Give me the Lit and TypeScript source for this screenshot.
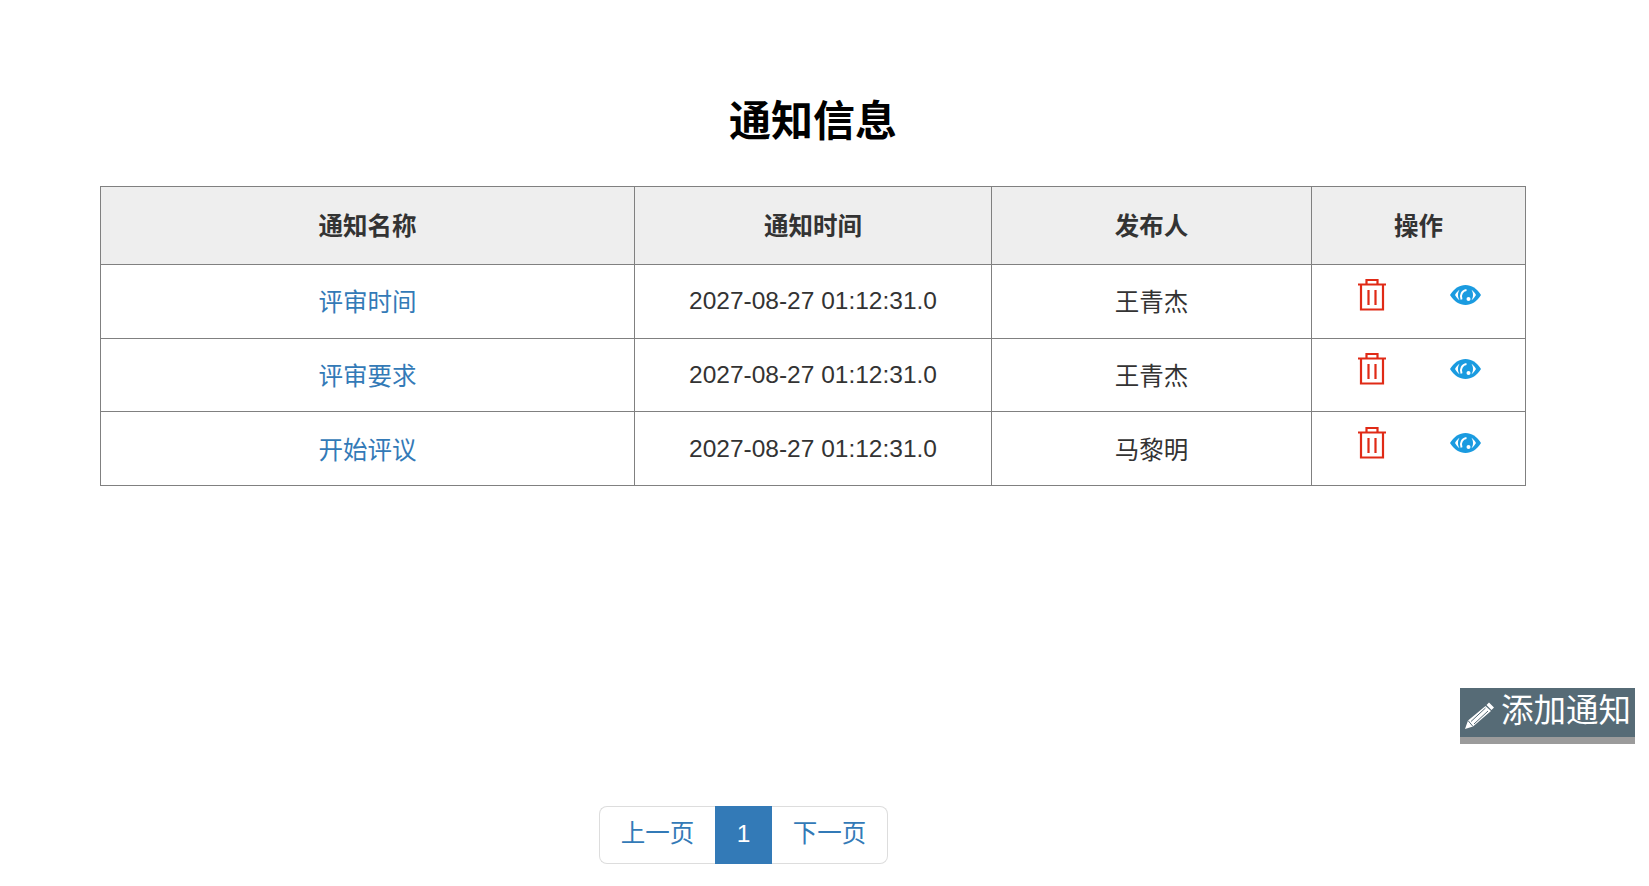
import { LitElement, html, css } from "lit";
import { customElement } from "lit/decorators.js";

const rows = [
  { name: "评审时间", time: "2027-08-27 01:12:31.0", who: "王青杰" },
  { name: "评审要求", time: "2027-08-27 01:12:31.0", who: "王青杰" },
  { name: "开始评议", time: "2027-08-27 01:12:31.0", who: "马黎明" },
];

const trash = html`<svg class="trash" viewBox="0 0 28 32" width="28" height="32" aria-hidden="true">
  <path d="M0 5.500h28M8.500 5V1h11v4M3 6.500v24h22v-24M10.500 11v15M17.500 11v15" fill="none" stroke="#e02a16" stroke-width="2.200"/>
</svg>`;

const eye = html`<svg class="eye" viewBox="0 0 31 20" width="31" height="20" aria-hidden="true">
  <path fill="#1a9be0" d="M0 10C4 3.500 9.500 0 15.500 0S27 3.500 31 10c-4 6.500-9.500 10-15.500 10S4 16.500 0 10Z"/>
  <path fill="#fff" d="M5 10c1.300-2.300 2.800-4 4.500-5.200C8.600 6.300 8 8 8 10s.6 3.700 1.500 5.200C7.800 14 6.300 12.300 5 10ZM26 10c-1.300 2.300-2.800 4-4.500 5.200.9-1.500 1.500-3.200 1.500-5.200s-.6-3.700-1.500-5.200C23.200 6 24.700 7.700 26 10Z"/>
  <path d="M11.500 14.500c-1.800-4.500.8-9 5-9.500" fill="none" stroke="#fff" stroke-width="2"/>
  <circle cx="18.500" cy="14" r="2" fill="#fff"/>
</svg>`;

const pencil = html`<svg class="pencil" viewBox="0 0 32 32" width="32" height="32" aria-hidden="true">
  <path fill="#fff" d="M25 2.500l5 5-2.500 2.500-5-5ZM21.500 6l5.500 5L9 26.500 1 29l3-8.500Z"/>
  <path d="M7 21.500L21.500 8M10 24L24 11M4 20.500l5 6" stroke="#566b76" stroke-width="1" fill="none"/>
</svg>`;

@customElement("app-root")
export class AppRoot extends LitElement {
  static styles = css`
    :host {
      display: block;
      position: relative;
      height: 886px;
      overflow: hidden;
      background: #fff;
      color: #333;
      font-family: "Liberation Sans", "Noto Sans CJK SC", sans-serif;
      font-size: 24.5px;
    }
    .page {
      padding: 0 123px 0 100px;
    }
    h1 {
      margin: 0;
      padding-top: 92px;
      height: 94px;
      line-height: 60px;
      font-size: 42px;
      font-weight: 700;
      color: #000;
      text-align: center;
      box-sizing: content-box;
    }
    table {
      width: 100%;
      table-layout: fixed;
      border-collapse: collapse;
    }
    .c1 { width: 534px; }
    .c2 { width: 357px; }
    .c3 { width: 320px; }
    th, td {
      border: 1px solid #808080;
      padding: 0;
      text-align: center;
      vertical-align: middle;
      box-sizing: border-box;
    }
    th {
      height: 78px;
      padding-bottom: 3px;
      background: #eee;
      font-weight: 700;
    }
    td {
      height: 73.67px;
    }
    td.cjk {
      padding-bottom: 1px;
    }
    a {
      color: #337ab7;
      text-decoration: none;
    }
    .ops {
      display: flex;
      justify-content: space-between;
      align-items: flex-start;
      height: 72px;
      padding: 14px 44px 0 46px;
      box-sizing: border-box;
    }
    .trash { display: block; }
    .eye { display: block; margin-top: 6px; }
    .pager {
      display: flex;
      width: max-content;
      margin: 320px 0 0 499px;
      height: 58px;
      line-height: 54px;
      box-sizing: border-box;
      white-space: nowrap;
    }
    .pager a {
      display: block;
      box-sizing: border-box;
      border: 1px solid #ddd;
      background: #fff;
      text-align: center;
    }
    .pager a.prev { border-radius: 8px 0 0 8px; border-right: 0; width: 116px; }
    .pager a.next { border-radius: 0 8px 8px 0; border-left: 0; width: 116px; }
    .pager a.cur {
      background: #337ab7;
      border-color: #337ab7;
      color: #fff;
      width: 57px;
    }
    .add {
      position: absolute;
      left: 1460px;
      top: 688px;
      width: 175px;
      height: 56px;
      box-sizing: border-box;
      border-bottom: 7px solid #9b9b9b;
      background: #566b76;
      color: #fff;
      font-size: 32.500px;
      line-height: 46px;
      display: flex;
      align-items: flex-start;
      padding-left: 4px;
      white-space: nowrap;
    }
    .pencil { flex: none; margin: 12px 5px 0 0; }
  `;

  render() {
    return html`
      <div class="page">
        <h1>通知信息</h1>
        <table>
          <colgroup>
            <col class="c1" /><col class="c2" /><col class="c3" /><col />
          </colgroup>
          <thead>
            <tr>
              <th>通知名称</th>
              <th>通知时间</th>
              <th>发布人</th>
              <th>操作</th>
            </tr>
          </thead>
          <tbody>
            ${rows.map(
              (r) => html`<tr>
                <td class="cjk"><a href="#">${r.name}</a></td>
                <td>${r.time}</td>
                <td class="cjk">${r.who}</td>
                <td><div class="ops">${trash}${eye}</div></td>
              </tr>`
            )}
          </tbody>
        </table>
        <nav class="pager">
          <a class="prev" href="#">上一页</a>
          <a class="cur" href="#">1</a>
          <a class="next" href="#">下一页</a>
        </nav>
      </div>
      <div class="add">${pencil}<span>添加通知</span></div>
    `;
  }
}
